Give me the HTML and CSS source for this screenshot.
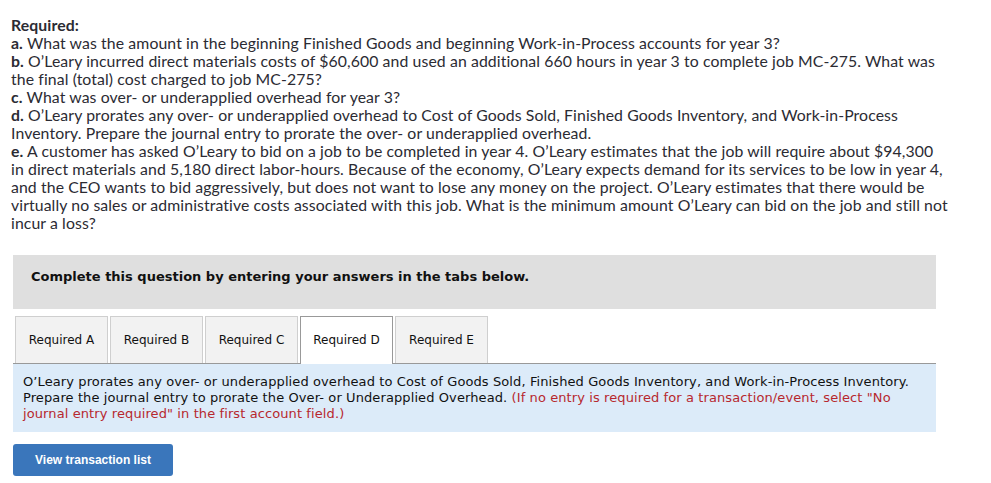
FILE: index.html
```html
<!DOCTYPE html>
<html>
<head>
<meta charset="utf-8">
<link rel="stylesheet" href="styles.css">
</head>
<body>
<div class="page">
  <div class="question">
    <div class="req-title">Required:</div>
    <div><b>a.</b> What was the amount in the beginning Finished Goods and beginning Work-in-Process accounts for year 3?</div>
    <div><b>b.</b> O’Leary incurred direct materials costs of $60,600 and used an additional 660 hours in year 3 to complete job MC-275. What was<br>the final (total) cost charged to job MC-275?</div>
    <div><b>c.</b> What was over- or underapplied overhead for year 3?</div>
    <div><b>d.</b> O’Leary prorates any over- or underapplied overhead to Cost of Goods Sold, Finished Goods Inventory, and Work-in-Process<br>Inventory. Prepare the journal entry to prorate the over- or underapplied overhead.</div>
    <div><b>e.</b> A customer has asked O’Leary to bid on a job to be completed in year 4. O’Leary estimates that the job will require about $94,300<br>in direct materials and 5,180 direct labor-hours. Because of the economy, O’Leary expects demand for its services to be low in year 4,<br>and the CEO wants to bid aggressively, but does not want to lose any money on the project. O’Leary estimates that there would be<br>virtually no sales or administrative costs associated with this job. What is the minimum amount O’Leary can bid on the job and still not<br>incur a loss?</div>
  </div>

  <div class="instructions">Complete this question by entering your answers in the tabs below.</div>

  <div class="tabs">
    <div class="tab">Required A</div>
    <div class="tab">Required B</div>
    <div class="tab">Required C</div>
    <div class="tab active">Required D</div>
    <div class="tab">Required E</div>
  </div>

  <div class="panel">
    O’Leary prorates any over- or underapplied overhead to Cost of Goods Sold, Finished Goods Inventory, and Work-in-Process Inventory. Prepare the journal entry to prorate the Over- or Underapplied Overhead. <span class="hint">(If no entry is required for a transaction/event, select "No journal entry required" in the first account field.)</span>
  </div>

  <button class="btn">View transaction list</button>
</div>
</body>
</html>
```

FILE: styles.css
```css
html, body {
  margin: 0;
  padding: 0;
  background: #fff;
}
.page {
  padding: 16px 0 0 13px;
  width: 923px;
}
.question {
  margin-left: -2px;
  width: 975px;
  font-family: Lato, "Open Sans", sans-serif;
  font-size: 15.8px;
  letter-spacing: 0.1px;
  line-height: 18px;
  color: #2b2b33;
}
.question b, .req-title {
  font-weight: bold;
}
.instructions {
  margin-top: 23px;
  height: 54px;
  box-sizing: border-box;
  background: #dfdfdf;
  padding: 14px 0 0 18px;
  font-family: "DejaVu Sans", Verdana, sans-serif;
  font-weight: bold;
  font-size: 13px;
  color: #111;
}
.tabs {
  display: flex;
  gap: 2px;
  margin-top: 7px;
  padding-left: 2px;
  border-bottom: 1px solid #999;
  height: 47px;
}
.tab {
  width: 93px;
  height: 47px;
  box-sizing: border-box;
  border: 1px solid #cfcfcf;
  border-bottom: none;
  background: #f2f2f2;
  display: flex;
  align-items: center;
  justify-content: center;
  font-family: "DejaVu Sans", Verdana, sans-serif;
  font-size: 12px;
  color: #111;
}
.tab.active {
  background: #fff;
  border-color: #999;
  height: 48px;
  padding-bottom: 1px;
  position: relative;
  z-index: 1;
}
.panel {
  background: #dcebf9;
  padding: 10px 10px 10px 10px;
  font-family: "DejaVu Sans", Verdana, sans-serif;
  font-size: 13px;
  line-height: 16px;
  letter-spacing: 0.1px;
  color: #111;
}
.hint {
  color: #b7282e;
}
.btn {
  margin-top: 12px;
  width: 160px;
  height: 32px;
  border: none;
  border-radius: 3px;
  background: #3a76bb;
  color: #fff;
  font-family: "Liberation Sans", Arial, sans-serif;
  font-weight: bold;
  font-size: 12px;
  padding: 0;
}
```
